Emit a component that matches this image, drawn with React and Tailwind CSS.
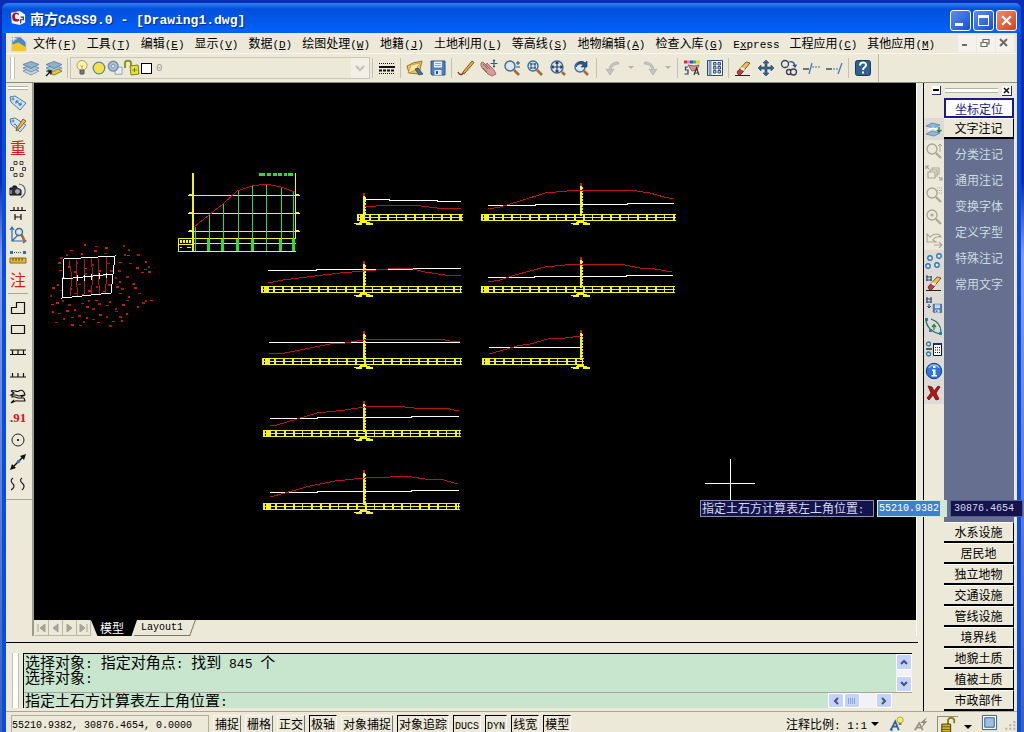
import { Fragment } from 'react'

const MENUS = [
  ['文件', 'F'], ['工具', 'T'], ['编辑', 'E'], ['显示', 'V'], ['数据', 'D'],
  ['绘图处理', 'W'], ['地籍', 'J'], ['土地利用', 'L'], ['等高线', 'S'],
  ['地物编辑', 'A'], ['检查入库', 'G'], ['Express', ''], ['工程应用', 'C'], ['其他应用', 'M'],
]

const NOTE_ITEMS = ['分类注记', '通用注记', '变换字体', '定义字型', '特殊注记', '常用文字']
const LAYER_ITEMS = ['水系设施', '居民地', '独立地物', '交通设施', '管线设施', '境界线', '地貌土质', '植被土质', '市政部件']

const STATUS_MODES = [
  ['捕捉', false], ['栅格', false], ['正交', false], ['极轴', true], ['对象捕捉', false],
  ['对象追踪', true], ['DUCS', true], ['DYN', true], ['线宽', true], ['模型', true],
]

// latin runs are set in the mono face, everything else stays in the CJK face
function T({ children, latin = 'text-[10px]' }) {
  return children.split(/([\x20-\x7e]+)/).map((part, i) =>
    i % 2 ? (
      <span key={i} className={`whitespace-pre font-['Liberation_Mono',monospace] leading-none ${latin}`}>{part}</span>
    ) : (
      <Fragment key={i}>{part}</Fragment>
    )
  )
}

function Ic({ children, className = 'h-[18px] w-[18px]' }) {
  return (
    <svg viewBox="0 0 18 18" className={className} fill="none" stroke="currentColor" aria-hidden="true">
      {children}
    </svg>
  )
}

const sheets = (
  <g strokeWidth="0.8">
    <path d="M1 12l8 4 8-4-8-3z" fill="#c9d8e4" stroke="#6b87a5" />
    <path d="M1 9l8 4 8-4-8-3z" fill="#a9c4dc" stroke="#5d7c9e" />
    <path d="M1 5.500l8 4 8-4-8-3z" fill="#8fb0cf" stroke="#54779c" />
  </g>
)

const lens = (cx, cy, r, stroke = '#45688e') => (
  <g>
    <path d={`M${cx + r - 1} ${cy + r - 1}L16 16`} stroke="#a06c3c" strokeWidth="2.6" />
    <circle cx={cx} cy={cy} r={r} fill="#d6e8f6" stroke={stroke} strokeWidth="1.4" />
  </g>
)

const grayLens = (
  <g stroke="#a9a69a">
    <circle cx="7" cy="7" r="5" strokeWidth="1.3" />
    <path d="M11 11l5 5" strokeWidth="2.200" />
  </g>
)

const eraser = (
  <g>
    <path d="M1 16.500h15" stroke="#222" />
    <path d="M3 13L12 3l4 1-9 11z" fill="#f0c24a" stroke="#5a3a1c" strokeWidth="0.8" />
    <path d="M3 13l3-3 3.500 2L7 15.500H4z" fill="#c93a3a" stroke="#5a1c1c" strokeWidth="0.6" />
    <path d="M6 10l3.500 2 1.500-2-3-2z" fill="#eee" stroke="none" />
  </g>
)

const floppy = (
  <g>
    <path d="M2 2h14v14H3l-1-1z" fill="#4f7fbe" stroke="#2c5288" />
    <path d="M5 2.500h8v6H5z" fill="#eaf2fa" stroke="none" />
    <path d="M6 4.500h6M6 6.500h6" stroke="#8aa8c8" />
    <path d="M5.500 11h7v5h-7z" fill="#dbe6f2" stroke="none" />
    <path d="M7 12h2v3H7z" fill="#2c5288" stroke="none" />
  </g>
)

const tag = (
  <g>
    <path d="M1 3l5-1 11 7-6 7L2 8z" fill="#cfe3f2" stroke="#4a7ba6" />
    <circle cx="4" cy="5" r="1" fill="#fff" stroke="#4a7ba6" />
  </g>
)

const ICONS = {
  sheets,
  sheetsPrev: (
    <g>
      {sheets}
      <path d="M5 14l4 2 8-4-4-2z" fill="#e8c832" stroke="#8d7a1c" strokeWidth="0.8" />
      <path d="M1 17l5-5M2.500 12H6v3.500" stroke="#111" strokeWidth="1.3" />
    </g>
  ),
  bulb: (
    <g>
      <circle cx="9" cy="6.500" r="5" fill="#fdf3b0" stroke="#b59a4a" />
      <path d="M7 11h4v4H7z" fill="#6c7a88" stroke="#4c5a68" />
      <path d="M7.500 6l1.500 2 1.500-2M9 8v3" stroke="#c8962c" strokeWidth="0.8" />
    </g>
  ),
  sun: <circle cx="9" cy="9" r="6.500" fill="#f8e04a" stroke="#5d8a8e" strokeWidth="1.4" />,
  freeze: (
    <g>
      <path d="M9 8h8v8H9z" fill="#e8eef2" stroke="#8aa0b0" />
      <circle cx="7" cy="7" r="5.500" fill="#a9c2d2" stroke="#6f90a8" strokeWidth="1.6" />
      <circle cx="7" cy="7" r="2" fill="#dfeaf0" stroke="#6f90a8" />
    </g>
  ),
  unlock: (
    <g>
      <path d="M2 9V4c0-3 6-3 6 0v4" stroke="#8a9420" strokeWidth="2" />
      <path d="M7 7l8-1 1 9-8 1z" fill="#e6e23c" stroke="#7c8418" />
      <path d="M11.500 9v4M9 11h5" stroke="#7c8418" />
    </g>
  ),
  linetype: (
    <g stroke="#111">
      <path d="M1 4.500h16" strokeDasharray="1 1" />
      <path d="M1 8h16" strokeWidth="2" />
      <path d="M1 11.500h16" strokeWidth="2" strokeDasharray="3 1" />
      <path d="M1 14.500h16" strokeDasharray="1 1" />
    </g>
  ),
  open: (
    <g>
      <path d="M1 7l6-3 9-2-3 13-10-1z" fill="#f1c85a" stroke="#97742a" />
      <path d="M5 6l9-2-4 7-8 3z" fill="#fbe6a0" stroke="#b08a38" strokeWidth="0.7" />
      <path d="M9 10l3-1 5 6-4 1z" fill="#4b6f98" stroke="#27415f" strokeWidth="0.7" />
    </g>
  ),
  floppy,
  pencil: (
    <g>
      <path d="M1 13c2 4 5 3 6 0" stroke="#902020" strokeWidth="1.3" />
      <path d="M6 13L15 2l2 1.500L8 14l-3 1z" fill="#f2b13c" stroke="#6d4316" strokeWidth="0.9" />
    </g>
  ),
  pan: (
    <g>
      <path d="M1 4l2-1 3 3 1-2 4 4 3 3 2 4-4 2-4-2-5-5-2-3z" fill="#d89c98" stroke="#8b5656" strokeWidth="0.8" />
      <path d="M3 5l5 5M6 6l4 4M3 9l4 4" stroke="#8a5050" strokeWidth="0.8" />
      <path d="M14 1v7M10.500 4.500h7M13 2l1-1 1 1M13 7l1 1 1-1" stroke="#2f5c92" strokeWidth="1.2" />
    </g>
  ),
  zoomRt: <g>{lens(7, 7, 5)}<path d="M13 4h4M15 2v4M13 8h4" stroke="#2f4f78" strokeWidth="1.1" /></g>,
  zoomWin: <g>{lens(7, 7, 5)}<path d="M5 4v6M9 4v6M4 5h6M4 9h6" stroke="#274f80" /></g>,
  zoomAll: <g>{lens(8, 8, 6)}<path d="M8 3v10M3 8h10M6.500 4.500L8 3l1.500 1.500M6.500 11.500L8 13l1.500-1.500M4.500 6.500L3 8l1.500 1.500M11.500 6.500L13 8l-1.500 1.500" stroke="#223c5c" strokeWidth="1.2" /></g>,
  zoomPrev: <g>{lens(8, 8, 5)}<path d="M4 8c1-6 7-7 9-4l2-2v6H9l2-2c-2-2-5-1-7 2z" fill="#2d5688" stroke="#1d3a60" strokeWidth="0.6" /></g>,
  undo: <path d="M14 3C8 3 5 7 5 11l-3-1 4 6 4-6-3 1c0-3 3-6 8-6z" fill="#c3c4c6" stroke="#a9abaf" strokeWidth="0.7" />,
  redo: <path d="M4 3c6 0 9 4 9 8l3-1-4 6-4-6 3 1c0-3-3-6-8-6z" fill="#c3c4c6" stroke="#a9abaf" strokeWidth="0.7" />,
  props: (
    <g>
      <path d="M1 1.500h3v3H1z" fill="#e02a2a" stroke="none" />
      <path d="M4 1.500h3v3H4z" fill="#e07ae0" stroke="none" />
      <path d="M7 1.500h3v3H7z" fill="#2a54e0" stroke="none" />
      <path d="M10 1.500h3v3h-3z" fill="#2ac84a" stroke="none" />
      <path d="M13 1.500h4v3h-4z" fill="#e8d428" stroke="none" />
      <path d="M5 6l6 1 5-1-2 5-5 1z" fill="#d8948e" stroke="#7a3a3a" strokeWidth="0.7" />
      <path d="M5 8H2.500v3H5v4H1.500" stroke="#2b3b6b" strokeWidth="1.2" />
      <path d="M11 16l2.500-7L16 16M12 14h3" stroke="#333" strokeWidth="1.2" />
    </g>
  ),
  palette: (
    <g>
      <path d="M1.500 1.500h15v15h-15z" fill="#f5f9fd" stroke="#2f4c78" />
      <path d="M3 1.500h2v15H3z" fill="#a9bdd6" stroke="#2f4c78" strokeWidth="0.6" />
      {[3.500, 7.500, 11.500].map((y) => (
        <g key={y} stroke="#2f4c78" fill="#b9cbe2">
          <path d={`M7.500 ${y}h2.500v2.500H7.500zM12 ${y}h2.500v2.500H12z`} />
        </g>
      ))}
    </g>
  ),
  eraser,
  move: <path d="M9 1l3 3h-2v4h4V6l3 3-3 3v-2h-4v4h2l-3 3-3-3h2v-4H4v2L1 9l3-3v2h4V4H6z" fill="#39608e" stroke="#1f4068" strokeWidth="0.6" />,
  copy: (
    <g strokeWidth="1.300" stroke="#3b3f48">
      <circle cx="5" cy="5" r="3.500" fill="#e2e8ee" />
      <circle cx="9" cy="13" r="2.500" fill="#e2e8ee" />
      <circle cx="13.500" cy="13" r="3" fill="#e2e8ee" />
      <path d="M9 3c3-1 5 0 6 4M13 6l2 2 1.500-2.500" stroke="#28568a" />
    </g>
  ),
  trim: <g strokeWidth="1.2"><path d="M0 10h6" stroke="#222" /><path d="M9 4L6 15" stroke="#3c78b0" /><path d="M9 8h8" stroke="#3c78b0" strokeDasharray="2 1" /></g>,
  extend: <g strokeWidth="1.2"><path d="M0 10h6" stroke="#222" /><path d="M7 10h5" stroke="#3c78b0" strokeDasharray="2 1" /><path d="M16 4l-4 11" stroke="#3c78b0" /></g>,
  help: (
    <g>
      <rect x="1.500" y="1.500" width="15" height="15" rx="2" fill="#2e6090" stroke="#173a62" />
      <path d="M6 6.500c0-4 6-4 6-.5 0 2.500-3 2-3 5" stroke="#fff" strokeWidth="2" />
      <path d="M8 12.500h2v2H8z" fill="#fff" stroke="none" />
    </g>
  ),
  tag: <g>{tag}<path d="M7 7l5 4M7 9.500V7h2.500M12 8.500V11H9.500" stroke="#1c62a8" /></g>,
  tagEdit: <g>{tag}<path d="M5 8c2 0 3 2 3 4" stroke="#1c62a8" /><path d="M8 12l6-9 3 2-7 8-3 2z" fill="#f0b840" stroke="#6d4316" strokeWidth="0.8" /></g>,
  squares: (
    <g stroke="#444">
      <path d="M5 1.500h3v3H5zM11 1.500h3v3h-3zM1.500 7.500h3v3h-3zM13.500 7.500h3v3h-3zM5 13.500h3v3H5zM11 13.500h3v3h-3z" fill="#ddd" />
    </g>
  ),
  camera: (
    <g>
      <path d="M1 6h3V4h3l1 2 4 2v5H1z" fill="#2c2c40" stroke="#111" />
      <circle cx="8.500" cy="9.500" r="3" fill="#9aa6c0" stroke="#222" />
      <path d="M2 8v4" stroke="#ccc" />
      <path d="M10 2c7 1 8 9 3 13M12 16l1-1.500" stroke="#55617e" strokeWidth="1.2" />
    </g>
  ),
  hatchFence: <path d="M1 6.500h16M5 3v3M9 3v3M13 3v3M6 10v6M12 10v6M6 13h6" stroke="#111" strokeWidth="1.2" />,
  axisLens: <g><path d="M3 2v13h13M1 4l2-3 2 3M14 13l3 2-3 2M3 15l6-6" stroke="#2d6ca4" strokeWidth="1.2" />{lens(10, 6, 3.500)}</g>,
  ruler: (
    <g>
      <path d="M1 3h3v3H1zM14 3h3v3h-3z" fill="#2a6eb0" stroke="none" />
      <path d="M5 4.500h8" stroke="#444" strokeDasharray="1 1" />
      <path d="M1 10h16v5H1z" fill="#e6b93a" stroke="#8a6a18" />
      <path d="M4 10v3M7 10v3M10 10v3M13 10v3" stroke="#6a4a10" />
    </g>
  ),
  building: <path d="M2.500 8.500h5v-5h8v11h-13z" stroke="#111" strokeWidth="1.2" />,
  rect: <path d="M2.500 4.500h13v8h-13z" stroke="#111" strokeWidth="1.2" />,
  rail: <path d="M1 7h16M1 11.500h16M3.500 7v5M9 7v5M14.500 7v5" stroke="#111" strokeWidth="1.2" />,
  comb: <path d="M1 12h16M3.500 8v4M9 8v4M14.500 8v4" stroke="#111" strokeWidth="1.2" />,
  slope: <path d="M2 4c3-2 5 2 8 0s4 0 5 1M2 4l3 2-3 2h5l3 1 5-1M15 5l1 3-4 2M3 8v2c3-1 5 1 7 1h5M15 11l1 3H9c-2-1-4 1-7 2l3-3" stroke="#111" strokeWidth="1.1" />,
  point: <g stroke="#222"><circle cx="9" cy="9" r="6" /><path d="M8 9h2M9 8v2" strokeWidth="1.4" /></g>,
  line: (
    <g>
      <path d="M3 15L15 3" stroke="#111" strokeWidth="1.4" />
      <path d="M1 17l2-6 4 4zM17 1l-6 2 4 4z" fill="#111" stroke="none" />
      <circle cx="9.500" cy="8.500" r="1.700" fill="#2b7cc4" stroke="none" />
    </g>
  ),
  curves: <path d="M4 3c-3 2-2 4 0 6s1 4-2 6M13 3c-3 2-1 4 1 6s1 4-1 6" stroke="#222" strokeWidth="1.2" />,
  layerSwap: (
    <g>
      <path d="M1 6l6-3 8 2-6 3zM1 14l6-3 8 2-6 3z" fill="#8fb8d6" stroke="#4f86b0" strokeWidth="0.8" />
      <path d="M3 10l5-2 6 2" stroke="#fff" strokeWidth="1.4" />
      <path d="M14 7v5M12 10l2 2 2.500-2" stroke="#1c7a3c" strokeWidth="1.3" />
    </g>
  ),
  gZoomUp: <g>{grayLens}<path d="M15 2v8M13 4l2-2 2 2" stroke="#a9a69a" /></g>,
  gPages: <path d="M3 8h7v6H3zM5 8V6h7v6h-2M7 6V4h7v6h-2M1 5V2h3M1 2l3 3M14 13l3 3M17 13v3h-3" stroke="#a9a69a" strokeWidth="1.1" />,
  gZoomDots: <g>{grayLens}<path d="M12 2h6M12 4.500h6M12 7h6" stroke="#a9a69a" strokeDasharray="1 1" /></g>,
  gZoomIn: <g>{grayLens}<path d="M5.500 7h3M7 5.500v3" stroke="#a9a69a" strokeWidth="1.5" /></g>,
  gUndo: <path d="M2 12V4l3 3c4-4 9-4 11 0-4-1-7 1-8 3l3 2zM9 15h8M14 12l3 3-3 3" stroke="#a9a69a" strokeWidth="1.1" />,
  circles: (
    <g stroke="#2f78b8" strokeWidth="1.4" fill="#dcecf8">
      <circle cx="5" cy="6" r="2.200" /><circle cx="14" cy="4" r="2.200" />
      <circle cx="3" cy="14" r="2.200" /><circle cx="12" cy="13" r="2.200" />
    </g>
  ),
  cropErase: <g>{eraser}<path d="M1 3h6M2 1v6M6 2v5M1 6h6" stroke="#24406c" /></g>,
  cropSave: <g><path d="M1 3h6M2 1v6M6 1v6M1 6h6M4 8v3M2.500 10L4 12l2-2" stroke="#24406c" /><g transform="translate(7 7) scale(.6)">{floppy}</g></g>,
  arcs: (
    <g>
      <path d="M1 1c0 8 6 14 16 15M6 1c6 2 10 7 10 13" stroke="#2a6478" strokeWidth="1.3" />
      <path d="M0 0h3v3H0zM4 11h3v3H4zM14 14h3v3h-3z" fill="#1f8a9a" stroke="none" />
      <path d="M9 12V7M7 9l2-2.500L11 9" stroke="#1c8a3c" strokeWidth="1.3" />
    </g>
  ),
  list: (
    <g>
      <circle cx="3.500" cy="4" r="2" stroke="#2f78b8" strokeWidth="1.3" />
      <circle cx="3.500" cy="14" r="2" stroke="#2f78b8" strokeWidth="1.3" />
      <path d="M1 9h6" stroke="#111" strokeWidth="1.3" />
      <path d="M8.500 3.500h8v12h-8z" fill="#fff" stroke="#111" />
      <path d="M8 4h9" stroke="#1c2a80" strokeWidth="2" />
      <path d="M10 7.500h5M10 10h5M10 12.500h5" stroke="#111" strokeDasharray="1 1" />
    </g>
  ),
  info: (
    <g>
      <circle cx="9" cy="9" r="7.700" fill="#2f74dc" stroke="#163a8c" />
      <path d="M4 6c2-4 8-4 10 0" stroke="#8fbcf6" strokeWidth="1.5" />
      <path d="M8 4h2.500v2H8zM7 7.500h3.500V13H12v1.500H6.500V13H8V9H7z" fill="#fff" stroke="none" />
    </g>
  ),
  del: <path d="M3 2l4 1 2 4 4-5 2 1-4 6 3 6-3 1-3-5-4 5-2-2 4-5z" fill="#b01818" stroke="#6c0c0c" strokeWidth="0.8" />,
}

function ToolBtn({ name, label, className = 'h-[22px] w-[23px]' }) {
  return (
    <button type="button" aria-label={label || name} className={`flex shrink-0 items-center justify-center ${className}`}>
      <Ic>{ICONS[name]}</Ic>
    </button>
  )
}

function Sep({ className = 'mx-[2px]' }) {
  return <span className={`h-5 w-px shrink-0 bg-[#c4c1b0] ${className}`} />
}

function DropArrow() {
  return (
    <button type="button" aria-label="历史" className="flex w-[14px] justify-center">
      <svg viewBox="0 0 6 4" className="h-1 w-1.5"><path d="M0 0h6L3 3z" fill="#b4b1a5" /></svg>
    </button>
  )
}

function TitleBar() {
  return (
    <header className="flex h-[30px] shrink-0 items-center rounded-t-md bg-linear-to-b from-[#2f82f4] via-[#0050dc] via-20% to-[#0262fb] px-2 text-white">
      <svg viewBox="0 0 18 18" className="h-4 w-4" aria-hidden="true">
        <path d="M1 3l10-2 6 4v9l-6 3-9-2z" fill="#f2f2f2" />
        <path d="M10 4c-5-3-8 0-7.500 5 .5 4 4 5 8 3l-.5-2c-3 1-4.500 0-4.500-3s2-3.500 4.500-1z" fill="#b01020" />
        <path d="M12 8h3v3h-3v4" stroke="#28324a" strokeWidth="1.300" fill="none" />
      </svg>
      <h1 className="ml-1 flex-1 whitespace-nowrap text-[14px] font-bold [text-shadow:1px_1px_1px_#0a2a80]">
        <T latin="text-[13px]">南方CASS9.0 - [Drawing1.dwg]</T>
      </h1>
      <div className="-mr-1 flex gap-[2px] pt-1">
        <button type="button" aria-label="最小化" className="h-[21px] w-[21px] rounded-[3px] border border-white bg-linear-to-br from-[#5c8cf0] to-[#1a4ed0] p-1">
          <span className="mt-2 block h-[3px] w-2 bg-white" />
        </button>
        <button type="button" aria-label="最大化" className="h-[21px] w-[21px] rounded-[3px] border border-white bg-linear-to-br from-[#5c8cf0] to-[#1a4ed0] p-1">
          <span className="block h-[11px] w-[11px] border border-t-[3px] border-white" />
        </button>
        <button type="button" aria-label="关闭" className="h-[21px] w-[21px] rounded-[3px] border border-white bg-linear-to-br from-[#ee8a68] to-[#d0401c] p-[3px]">
          <svg viewBox="0 0 12 12" className="h-[13px] w-[13px]"><path d="M2 2l8 8M10 2l-8 8" stroke="#fff" strokeWidth="2" /></svg>
        </button>
      </div>
    </header>
  )
}

function MenuBar() {
  return (
    <nav className="flex h-[21px] shrink-0 items-center border-b border-[#f8f6ee] pl-1 text-[12px] leading-4">
      <svg viewBox="0 0 18 18" className="h-[17px] w-[17px]" aria-hidden="true">
        <path d="M2 2h11l4 4v11H2z" fill="#4f86bc" stroke="#cfdcea" />
        <path d="M2 10l7-2 8 5v4H2z" fill="#f4c62e" />
        <path d="M11 2l6 6V2z" fill="#dfe9f2" />
        <path d="M4 1v6M1 4h6" stroke="#e8f4ff" strokeWidth="1.300" />
      </svg>
      <ul className="ml-[6px] flex flex-1 gap-[10px] whitespace-nowrap">
        {MENUS.map(([name, key]) => (
          <li key={name}>
            <button type="button">
              {key ? (
                <>
                  {name}
                  <span className="font-['Liberation_Mono',monospace] text-[11px] leading-none">(<u>{key}</u>)</span>
                </>
              ) : (
                <span className="font-['Liberation_Mono',monospace] text-[11px] leading-none">E<u>x</u>press</span>
              )}
            </button>
          </li>
        ))}
      </ul>
      <div className="mr-[3px] flex gap-px">
        {['M4 10h5', 'M4 7.500h6v4H4zM6 7V4.500h6V9h-2', 'M4 4l7 7M11 4l-7 7'].map((d, i) => (
          <button key={d} type="button" aria-label={['最小化文档', '还原文档', '关闭文档'][i]} className="h-[17px] w-[18px] bg-[#f4f2ec]">
            <svg viewBox="0 0 16 16" className="h-4 w-4"><path d={d} fill="none" stroke="#6b6b68" strokeWidth={i === 1 ? 1.2 : 2} /></svg>
          </button>
        ))}
      </div>
    </nav>
  )
}

function Toolbar() {
  return (
    <div className="flex h-[29px] shrink-0 items-center border-b border-[#8d8b80]">
      <div className="flex h-full w-fit items-center border-r border-[#bdbaa9] pr-1">
        <span className="ml-[4px] mr-[4px] h-[22px] w-[5px] border-x border-[#c4c1b0] bg-white" />
        <ToolBtn name="sheets" label="图层" />
        <ToolBtn name="sheetsPrev" label="上一图层" />
        <Sep />
        <div className="flex h-[22px] w-[300px] items-center border border-[#c9c6b8] pl-[2px]">
          <Ic>{ICONS.bulb}</Ic>
          <Ic className="h-4 w-4">{ICONS.sun}</Ic>
          <Ic className="h-4 w-4">{ICONS.freeze}</Ic>
          <Ic>{ICONS.unlock}</Ic>
          <span className="h-[11px] w-[11px] border border-black bg-white" />
          <select aria-label="当前图层" disabled className="h-full flex-1 appearance-none bg-transparent pl-1 font-['Liberation_Mono',monospace] text-[11px] text-[#a3a194]">
            <option>0</option>
          </select>
          <span className="flex h-[20px] w-[18px] items-center justify-center bg-[#f1efe6]">
            <svg viewBox="0 0 10 8" className="h-2 w-2.5"><path d="M1 2l4 4 4-4" fill="none" stroke="#c3c1b6" strokeWidth="2" /></svg>
          </span>
        </div>
        <Sep />
        <ToolBtn name="linetype" label="线型" />
        <Sep />
        <ToolBtn name="open" label="打开" />
        <ToolBtn name="floppy" label="保存" />
        <Sep />
        <ToolBtn name="pencil" />
        <ToolBtn name="pan" label="平移" />
        <ToolBtn name="zoomRt" />
        <ToolBtn name="zoomWin" />
        <ToolBtn name="zoomAll" />
        <ToolBtn name="zoomPrev" />
        <Sep className="mx-1" />
        <ToolBtn name="undo" label="放弃" />
        <DropArrow />
        <ToolBtn name="redo" label="重做" />
        <DropArrow />
        <Sep />
        <ToolBtn name="props" label="特性" />
        <ToolBtn name="palette" />
        <Sep />
        <ToolBtn name="eraser" label="删除" />
        <ToolBtn name="move" label="移动" />
        <ToolBtn name="copy" label="复制" />
        <ToolBtn name="trim" label="修剪" />
        <ToolBtn name="extend" label="延伸" />
        <Sep />
        <ToolBtn name="help" label="帮助" />
      </div>
    </div>
  )
}

function LeftTools() {
  const btn = 'h-[22px] w-[24px]'
  const red = "h-[22px] w-[24px] text-[16px] leading-[20px] text-[#e01818]"
  return (
    <aside className="w-[28px] shrink-0 border-r-2 border-[#9d9b90]">
      <div className="flex flex-col items-start border-b border-[#a9a698] pb-1">
        <span className="mb-[2px] ml-[2px] mt-[3px] h-1 w-5 border-y border-[#b5b2a2] bg-white" />
        <ToolBtn name="tag" className={btn} />
        <ToolBtn name="tagEdit" className={btn} />
        <button type="button" className={red}>重</button>
        <ToolBtn name="squares" className={btn} />
        <ToolBtn name="camera" className={btn} />
        <ToolBtn name="hatchFence" className={btn} />
        <ToolBtn name="axisLens" className={btn} />
        <ToolBtn name="ruler" className={btn} />
        <button type="button" className={red}>注</button>
        <span className="my-[3px] ml-[2px] h-px w-5 bg-[#a9a698]" />
        <ToolBtn name="building" className={btn} />
        <ToolBtn name="rect" className={btn} />
        <ToolBtn name="rail" className={btn} />
        <ToolBtn name="comb" className={btn} />
        <ToolBtn name="slope" className={btn} />
        <button type="button" className="h-[22px] w-[24px] font-['Liberation_Serif',serif] text-[13px] font-bold text-[#d81414]">.91</button>
        <ToolBtn name="point" className={btn} />
        <ToolBtn name="line" className={btn} />
        <ToolBtn name="curves" className={btn} />
      </div>
    </aside>
  )
}

// one cross section: table band, elevation pole, design line (white) and ground line (red)
const SECTIONS = [
  { x1: 357, x2: 463, y: 214, cx: 364, top: 194, white: '365,199 389,199 389,200 437,200 437,201 461,201', red: '365,207 388,205 413,205 445,209 461,208' },
  { x1: 481, x2: 676, y: 214, cx: 581, top: 184, white: '488,205 535,205 535,204 627,204 627,203 674,203', red: '488,209 500,207 520,201 545,193 567,191 586,190 630,190 650,193 664,197 674,199' },
  { x1: 261, x2: 462, y: 286, cx: 364, top: 262, white: '268,270 316,270 316,269 412,269 412,268 461,268', red: '268,283 283,280 315,276 340,273 364,271 388,269 400,268 413,269 425,272 445,275 461,275' },
  { x1: 481, x2: 675, y: 286, cx: 581, top: 258, white: '488,277 534,277 534,276 626,276 626,275 673,275', red: '488,282 500,280 515,275 545,267 565,265 580,264 620,264 640,268 655,269 672,272' },
  { x1: 262, x2: 462, y: 358, cx: 364, top: 332, white: '269,342 460,342', red: '269,354 285,353 310,348 330,344 345,343 370,339 440,339 450,341 460,342' },
  { x1: 482, x2: 584, y: 358, cx: 581, top: 331, white: '489,347 581,347', red: '489,354 500,351 517,346 530,344 548,339 565,338 581,336' },
  { x1: 263, x2: 461, y: 430, cx: 364, top: 402, white: '270,418 317,418 317,417 411,417 411,416 459,416', red: '270,425 277,425 287,422 317,413 345,410 364,407 395,406 414,408 445,408 459,411' },
  { x1: 263, x2: 460, y: 503, cx: 364, top: 471, white: '270,492 317,492 317,491 411,491 411,490 459,490', red: '270,497 285,493 310,486 335,481 364,478 390,477 400,476 412,477 425,479 440,479 458,484' },
]

function Section({ x1, x2, y, cx, top, white, red }) {
  const ticks = []
  for (let x = x1 + 12; x < x2 - 2; x += 9) ticks.push(x)
  return (
    <g fill="none">
      <polyline points={white} stroke="#fff" />
      <path d={`M${x1} ${y}H${x2}M${x1} ${y + 3}H${x2}M${x1} ${y + 6}H${x2}M${x2 - 2} ${y}v7`} stroke="#f4f41c" />
      {ticks.map((x, i) => (
        <rect key={x} x={x} y={y} width={i % 4 === 3 ? 1 : 2} height="6" fill="#f4f41c" />
      ))}
      <path d={`M${x1} ${y}h2v6h-2zM${x1 + 3} ${y}h5v6h-5z`} fill="#f4f41c" />
      <rect x={cx - 1} y={top + 2} width="2" height={y - top} fill="#f4f41c" />
      <path d={`M${cx + 1} ${top + 3}V${y}`} stroke="#f4f41c" strokeDasharray="2 1" />
      <path d={`M${cx - 3} ${y + 6}h6v2h3v1h3v2h-7v-2h-4v2h-6v-1h-2v-1h4z`} fill="#f4f41c" />
      <polyline points={red} stroke="#c01414" />
      <rect x={cx - 1} y={top - 1} width="2" height="3" fill="#d01818" />
    </g>
  )
}

// surveyed elevation points scattered round the site
const POINTS = [
  [84, 244], [95, 246], [105, 247], [123, 245], [70, 250], [60, 257], [81, 253], [104, 253], [94, 250], [128, 249],
  [127, 255], [137, 254], [145, 261], [129, 263], [136, 267], [148, 266], [141, 272], [126, 276], [119, 281], [132, 284],
  [58, 262], [66, 254], [59, 270], [62, 277], [57, 284], [60, 290], [52, 287], [50, 295], [119, 262], [118, 270],
  [133, 283], [144, 269], [148, 271], [124, 254], [119, 293], [121, 288], [128, 296], [138, 293], [134, 287], [145, 300],
  [150, 300], [142, 302], [137, 306], [126, 300], [122, 304], [115, 308], [106, 305], [98, 303], [109, 301], [115, 311],
  [56, 302], [62, 300], [51, 304], [68, 304], [74, 309], [81, 303], [86, 306], [88, 300], [95, 300], [92, 308],
  [52, 311], [58, 313], [66, 310], [63, 318], [71, 317], [78, 315], [86, 317], [92, 319], [99, 314], [106, 316],
  [112, 321], [119, 316], [126, 313], [55, 322], [71, 324], [83, 321], [97, 322], [109, 325], [121, 320], [79, 325],
  [68, 266], [76, 262], [84, 268], [91, 264], [99, 270], [107, 263], [74, 271], [85, 273], [102, 275], [110, 270],
  [70, 288], [78, 284], [88, 290], [96, 286], [103, 291], [108, 284], [82, 294], [74, 293], [116, 286], [115, 277],
]

function Drawing() {
  return (
    <svg className="block h-full w-full" shapeRendering="crispEdges" role="img" aria-label="断面图">
      <g transform="translate(-34 -83)">
        <g fill="none" stroke="#f4f41c">
          <path d="M193 173V251" strokeWidth="2" />
          <path d="M295.500 173v65M188 195.500h112M188 213.500h112M188 231.500h112M178 238.500h118M193 243.500h103M178 251.500h118M178.500 238v13" />
          <path d="M189 194.500h5M189 212.500h5M189 230.500h5M295 194.500h4M295 212.500h4M295 230.500h4" />
          <path d="M180 241.500h12" strokeWidth="3" strokeDasharray="2 1" />
          <path d="M180 247.500h2M187 247.500h4M179 244.500h14" />
        </g>
        <g fill="none" stroke="#2ae02a">
          <path d="M195 227v24M209.500 215v36M223.500 204v47M238.500 191v60M252.500 186v65M266.500 184v67M281.500 187v64M293.500 191v60" />
          <path d="M208.500 239v12M222.500 239v12M237.500 239v12M252.500 239v12M280.500 239v12M293.500 239v12" strokeWidth="3" />
          <path d="M259 174.500h6m2 0h4m2 0h4m1 0h4m2 0h3m1 0h5" strokeWidth="3" />
        </g>
        <polyline points="194,227 209,215 223,204 237,191 252,186 266,184 281,187 295,192" fill="none" stroke="#c01414" />

        {POINTS.map(([x, y], i) => (
          <rect key={i} x={x} y={y} width={i % 3 ? 3 : 2} height={i % 3 === 1 ? 1 : 2} fill={i % 2 ? '#a81414' : '#d01818'} />
        ))}
        <path d="M69 260l3 18-2 18M77 260l-1 18 2 18M84 259l1 18-1 17M91 258l2 18-2 19M99 258l-1 18 2 18M106 257l1 18-2 18" fill="none" stroke="#b01414" />
        <path d="M64 259l51-3-4 37-49 5zM63 279l50-5M77 275v6M84 275v6M91 274v6M99 273v6M106 273v5" fill="none" stroke="#fff" />

        {SECTIONS.map((s) => <Section key={`${s.x1}-${s.y}`} {...s} />)}

        <path d="M705 483.500h50M730.500 459v49" stroke="#fff" />
      </g>
    </svg>
  )
}

function LayoutTabs() {
  return (
    <div className="flex h-4 shrink-0 items-stretch text-[12px] leading-4">
      <div className="flex pl-px">
        {['M3 2v8M10 2v8L5 6z', 'M9 2v8L4 6z', 'M4 2v8l5-4z', 'M3 2v8l5-4zM10 2v8'].map((d) => (
          <button key={d} type="button" aria-label="切换布局" className="flex w-[14px] items-center border-b border-r border-[#b9b6a8]">
            <svg viewBox="0 0 13 12" className="h-3 w-[13px]"><path d={d} fill="#a5a398" stroke="#a5a398" /></svg>
          </button>
        ))}
      </div>
      <button type="button" className="w-[46px] bg-black pr-1 leading-[14px] text-white [clip-path:polygon(0_0,100%_0,88%_100%,14%_100%)]">模型</button>
      <button type="button" className="relative px-1 font-['Liberation_Mono',monospace] text-[10px] before:absolute before:inset-0 before:-skew-x-[20deg] before:border-b before:border-r before:border-[#77756b]">
        Layout1&nbsp;
      </button>
    </div>
  )
}

function ScrollBtn({ d, label, className = 'h-4' }) {
  return (
    <button type="button" aria-label={label} className={`flex w-4 shrink-0 items-center justify-center rounded-[2px] border border-white bg-[#c3d3fb] ${className}`}>
      <svg viewBox="0 0 10 10" className="h-2.5 w-2.5"><path d={d} fill="none" stroke="#40557f" strokeWidth="2" /></svg>
    </button>
  )
}

function CommandWindow() {
  return (
    <section className="shrink-0 pt-1.5">
      <div className="mr-[5px] flex border-t border-black pb-[3px] pt-2.5">
        <span className="ml-[6px] mr-[4px] w-[7px] border-x border-[#c4c1b0] bg-white" />
        <div className="mr-1.5 h-[55px] min-w-0 flex-1 border-l border-t border-black bg-[#c8e6cd]">
          <div className="flex h-[39px] justify-between border-b border-[#a3a79f]">
            <div className="whitespace-nowrap pl-px text-[15px] leading-[15px]">
              <p className="h-[15px]"><T latin="text-[13px]">选择对象: 指定对角点: 找到 845 个</T></p>
              <p className="h-[15px]"><T latin="text-[13px]">选择对象:</T></p>
            </div>
            <div className="flex flex-col justify-between bg-[#f2f1f6]">
              <ScrollBtn label="向上" d="M2 7l3-3 3 3" />
              <ScrollBtn label="向下" d="M2 3l3 3 3-3" />
            </div>
          </div>
          <div className="flex h-[15px] items-center">
            <label htmlFor="cmd" className="whitespace-nowrap pl-px text-[15px] leading-[15px]">
              <T latin="text-[13px]">指定土石方计算表左上角位置:</T>
            </label>
            <input id="cmd" type="text" className="h-full min-w-0 flex-1 bg-transparent outline-none" />
            <div className="flex items-center bg-[#f2f1f6]">
              <ScrollBtn label="向左" d="M7 2L4 5l3 3" className="h-[15px]" />
              <button type="button" aria-label="滑块" className="flex h-[15px] w-4 items-center justify-center rounded-[2px] border border-white bg-[#c3d3fb]">
                <svg viewBox="0 0 10 10" className="h-2.5 w-2.5"><path d="M1.500 2v6M3.500 2v6M5.500 2v6M7.500 2v6" stroke="#8ca4e0" /></svg>
              </button>
              <span className="w-4" />
              <ScrollBtn label="向右" d="M3 2l3 3-3 3" className="h-[15px]" />
            </div>
            <span className="h-full w-5 shrink-0 bg-[#ece9d8]" />
          </div>
        </div>
      </div>
    </section>
  )
}

const RIGHT_ICONS = ['layerSwap', 'gZoomUp', 'gPages', 'gZoomDots', 'gZoomIn', 'gUndo', 'circles', 'cropErase', 'cropSave', 'arcs', 'list', 'info', 'del']

function RightPanel() {
  const flat = 'h-[21px] w-full shrink-0 border-b-2 border-r border-black border-t border-t-white bg-[#ece9d8] leading-[18px]'
  return (
    <aside className="flex w-[94px] shrink-0 flex-col border-l border-black pr-[3px]">
      <div className="flex h-[15px] shrink-0 items-center gap-1 pl-2 pr-[2px]">
        <button type="button" aria-label="折叠" className="h-[9px] w-[9px] border-b border-r border-[#2a2a6a] bg-white">
          <span className="mx-px block h-[2px] bg-black" />
        </button>
        <span className="h-[5px] flex-1 border-y border-[#b5b2a2] bg-white" />
        <button type="button" aria-label="关闭面板" className="h-[10px] w-[10px] border-b border-r border-[#2a2a6a] bg-white">
          <svg viewBox="0 0 9 9" className="h-[9px] w-[9px]"><path d="M2 2l5 5M7 2L2 7" stroke="#111" strokeWidth="1.500" /></svg>
        </button>
      </div>
      <div className="flex min-h-0 flex-1">
        <div className="flex w-5 shrink-0 flex-col items-center pt-5">
          {RIGHT_ICONS.map((name, i) => (
            <ToolBtn key={name} name={name} className={i === 0 || i > 5 ? 'h-[22px] w-5 bg-[#dddbd4]' : 'h-[22px] w-5'} />
          ))}
        </div>
        <div className="flex min-w-0 flex-1 flex-col text-[12px]">
          <button type="button" className="h-5 w-full shrink-0 border-2 border-[#1a1a8c] bg-white leading-[15px] text-[#1a1a8c]">坐标定位</button>
          <button type="button" className={flat}>文字注记</button>
          <ul className="flex-1 bg-[#666f8f] pt-0.5 text-[#c9dde0]">
            {NOTE_ITEMS.map((t) => (
              <li key={t}><button type="button" className="h-[26px] w-full">{t}</button></li>
            ))}
          </ul>
          {LAYER_ITEMS.map((t) => (
            <button key={t} type="button" className={flat}>{t}</button>
          ))}
        </div>
      </div>
    </aside>
  )
}

function StatusBar() {
  return (
    <footer className="flex h-[21px] shrink-0 items-end overflow-hidden border-t border-[#a9a698] pl-[5px] text-[12px] leading-[14px]">
      <output className="mr-1 h-[17px] w-[198px] border border-b-0 border-[#b0ad9e]">
        <T>55210.9382, 30876.4654, 0.0000</T>
      </output>
      <div className="flex flex-1 gap-1 whitespace-nowrap">
        {STATUS_MODES.map(([t, on]) => (
          <button
            key={t}
            type="button"
            aria-pressed={on}
            className={`h-[17px] border border-b-0 px-px ${on ? 'border-black border-r-[#f8f6ee]' : 'border-[#f8f6ee] border-r-[#77756b]'}`}
          >
            <T>{t}</T>
          </button>
        ))}
      </div>
      <div className="flex h-full items-center gap-[6px] pr-px pt-1">
        <button type="button" className="flex items-center gap-1 whitespace-nowrap pr-1">
          <span><T latin="text-[11px]">注释比例: 1:1</T></span>
          <svg viewBox="0 0 8 4" className="h-1 w-2"><path d="M0 0h8L4 4z" /></svg>
        </button>
        <button type="button" aria-label="注释可见性">
          <Ic className="h-4 w-4">
            <path d="M2 16L7 6l4 10M4 12h6M1 15l3 1" stroke="#2c6096" strokeWidth="2" />
            <circle cx="12.500" cy="4.500" r="3.500" fill="#f8ec60" stroke="#b8a030" />
            <path d="M11 9h3" stroke="#667" strokeWidth="2" />
          </Ic>
        </button>
        <button type="button" aria-label="自动添加比例">
          <Ic className="mx-0.5 h-4 w-4">
            <path d="M2 16L7 8l4 8M4 13h6" stroke="#96958d" strokeWidth="2" />
            <path d="M16 1l-8 7h4l-3 6 7-8h-3z" fill="#8b8a84" stroke="none" />
          </Ic>
        </button>
        <button type="button" aria-label="锁定" className="border-l border-t border-[#8f8d80] px-[2px]">
          <Ic className="h-4 w-4">
            <path d="M9 8V4c0-4 7-4 7 0v3" stroke="#8a7a18" strokeWidth="2" />
            <path d="M2 8h10v9H2z" fill="#d8b820" stroke="#332c08" />
            <path d="M2 11h10M2 14h10" stroke="#5a4c0c" />
          </Ic>
        </button>
        <button type="button" aria-label="状态栏菜单" className="pr-[3px] pt-1.5">
          <svg viewBox="0 0 8 4" className="h-1 w-2"><path d="M0 0h8L4 4z" /></svg>
        </button>
        <button type="button" aria-label="全屏显示">
          <Ic className="mb-1 h-[17px] w-[17px]">
            <path d="M1.500 1.500h15v15h-15z" fill="#f4f8fc" stroke="#2f5c92" />
            <path d="M4 4h10v10H4z" fill="#9cc0e4" stroke="#2f5c92" />
          </Ic>
        </button>
        <Ic className="h-3 w-3">
          <path d="M2 16h16M8 11h10M14 6h4" stroke="#b4b1a2" strokeWidth="3" strokeDasharray="3 3" />
        </Ic>
      </div>
    </footer>
  )
}

function DynamicInput() {
  const font = "font-['Liberation_Mono',monospace] text-[10px]"
  return (
    <form className="absolute left-[700px] top-[500px] flex h-[17px] items-stretch gap-[3px] whitespace-nowrap text-[12px]">
      <label htmlFor="dyn-x" className="w-[174px] border border-[#8a8ab4] bg-[#14144c] pl-px leading-[14px] text-[#d8d8ec]">
        <T>指定土石方计算表左上角位置:</T>
      </label>
      <span className="w-[70px] border border-[#cfe8dc] bg-[#cfe8dc]">
        <input id="dyn-x" defaultValue="55210.9382" className={`block h-full w-[62px] bg-[#3f7fd0] pl-px text-white outline-none ${font}`} />
      </span>
      <input aria-label="Y" defaultValue="30876.4654" className={`w-[73px] border border-[#5a5a8c] bg-[#14144c] pl-[3px] text-[#d8d8ec] outline-none ${font}`} />
    </form>
  )
}

export default function App() {
  return (
    <div className="relative h-screen overflow-hidden bg-linear-to-b from-[#0a2cb4] from-25% via-[#7f9cf0] via-35% to-[#3a60b8] pl-[2px] pr-[3px] pt-[3px] font-['Noto_Sans_CJK_SC',sans-serif] text-black">
      <div className="flex h-full flex-col rounded-t-md bg-[#0a4be0]">
        <TitleBar />
        <div className="mx-1 flex min-h-0 flex-1 flex-col bg-[#ece9d8]">
          <MenuBar />
          <Toolbar />
          <main className="flex min-h-0 flex-1">
            <div className="flex min-w-0 flex-1 flex-col">
              <div className="flex min-h-0 flex-1">
                <LeftTools />
                <div className="mr-[6px] flex min-w-0 flex-1 flex-col border-r border-white">
                  <div className="min-h-0 flex-1 bg-black"><Drawing /></div>
                  <LayoutTabs />
                </div>
              </div>
              <CommandWindow />
            </div>
            <RightPanel />
          </main>
          <StatusBar />
        </div>
      </div>
      <DynamicInput />
    </div>
  )
}
